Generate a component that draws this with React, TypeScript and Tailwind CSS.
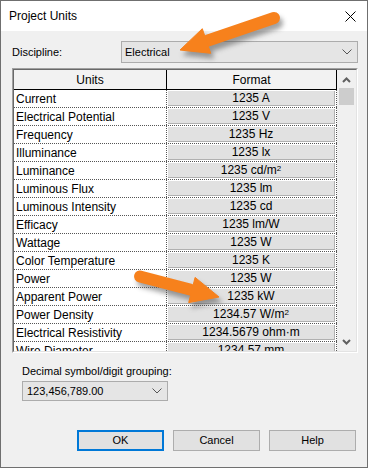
import React from "react";

const rows: [string, React.ReactNode][] = [
  ["Current", "1235 A"],
  ["Electrical Potential", "1235 V"],
  ["Frequency", "1235 Hz"],
  ["Illuminance", "1235 lx"],
  ["Luminance", <>1235 cd/m<sup className="text-[8px] relative -top-[1px]">2</sup></>],
  ["Luminous Flux", "1235 lm"],
  ["Luminous Intensity", "1235 cd"],
  ["Efficacy", "1235 lm/W"],
  ["Wattage", "1235 W"],
  ["Color Temperature", "1235 K"],
  ["Power", "1235 W"],
  ["Apparent Power", "1235 kW"],
  ["Power Density", <>1234.57 W/m<sup className="text-[8px] relative -top-[1px]">2</sup></>],
  ["Electrical Resistivity", "1234.5679 ohm·m"],
  ["Wire Diameter", "1234.57 mm"],
];

function Chevron({ up = false }: { up?: boolean }) {
  return (
    <svg width="9" height="6" viewBox="0 0 9 6">
      <path
        d={up ? "M1 5 L4.5 1.5 L8 5" : "M1 1 L4.5 4.5 L8 1"}
        fill="none"
        stroke="#606060"
        strokeWidth="2"
      />
    </svg>
  );
}

function ThinChevron() {
  return (
    <svg width="10" height="6" viewBox="0 0 10 6">
      <path d="M0.5 0.5 L5 5 L9.5 0.5" fill="none" stroke="#555" strokeWidth="1" />
    </svg>
  );
}

function Arrow({ tail, base, c1, c2, tip }: { tail: [number, number]; base: [number, number]; c1: [number, number]; c2: [number, number]; tip: [number, number] }) {
  return (
    <g>
      <line x1={tail[0]} y1={tail[1]} x2={base[0]} y2={base[1]} strokeWidth="12" strokeLinecap="round" />
      <polygon points={`${c1[0]},${c1[1]} ${tip[0]},${tip[1]} ${c2[0]},${c2[1]}`} strokeLinejoin="round" strokeWidth="1" />
    </g>
  );
}

export default function App() {
  const a1 = { tail: [274, 18] as [number, number], base: [208, 40.5] as [number, number], c1: [202.3, 28.7] as [number, number], c2: [210.7, 53.3] as [number, number], tip: [180, 50] as [number, number] };
  const a2 = { tail: [140, 276.5] as [number, number], base: [190, 289.5] as [number, number], c1: [195.1, 277.4] as [number, number], c2: [188.7, 302.6] as [number, number], tip: [219, 297] as [number, number] };
  return (
    <div className="relative w-[368px] h-[468px] overflow-hidden bg-[#f0f0f0] border border-[#6f6f6f] font-['Liberation_Sans',Arial,sans-serif] text-black">
      {/* Title bar */}
      <div className="h-[30px] bg-white flex items-center justify-between pl-[8px] pr-[11px]">
        <span className="text-[12px]">Project Units</span>
        <svg width="11" height="11" viewBox="0 0 11 11">
          <path d="M0.5 0.5 L10.5 10.5 M10.5 0.5 L0.5 10.5" stroke="#000" strokeWidth="1" />
        </svg>
      </div>

      {/* Body */}
      <div className="pl-[11px] pr-[9px] pt-[10px] flex flex-col">
        <div className="flex items-center h-[22px]">
          <span className="text-[11px] w-[109px]">Discipline:</span>
          <div className="flex-1 h-[22px] bg-[#e5e5e5] border border-[#acacac] flex items-center justify-between pl-[3px] pr-[5px]">
            <span className="text-[11px]">Electrical</span>
            <ThinChevron />
          </div>
        </div>

        {/* Table */}
        <div className="mt-[5px] h-[285px] border-t border-l border-[#a0a0a0] border-r border-b border-r-white border-b-white">
          <div className="h-full border-t border-l border-[#696969] border-r border-b border-r-[#e3e3e3] border-b-[#e3e3e3] flex bg-white">
            <div className="w-[323px] flex flex-col overflow-hidden">
              <div className="h-[20px] shrink-0 flex bg-[#f2f2f2] border-b border-black text-[12px]">
                <div className="w-[153px] border-r border-black flex items-center justify-center">Units</div>
                <div className="flex-1 border-r border-black flex items-center justify-center">Format</div>
              </div>
              {rows.map(([name, fmt], i) => (
                <div key={i} className="h-[18px] shrink-0 flex border-b border-dotted border-[#555] text-[12px] leading-none">
                  <div className="w-[153px] border-r border-dotted border-[#555] flex items-center pl-[2px] bg-white">{name}</div>
                  <div className="flex-1 border-r border-dotted border-[#555] p-[1px] bg-white">
                    <div className="h-full bg-[#e1e1e1] border-b border-r border-[#b0b0b0] flex items-center justify-center">
                      {fmt}
                    </div>
                  </div>
                </div>
              ))}
            </div>
            <div className="flex-1 bg-[#f0f0f0] flex flex-col items-center">
              <div className="h-[17px] flex items-center justify-center mt-[1px]"><Chevron up /></div>
              <div className="w-[15px] h-[17px] bg-[#cdcdcd]" />
              <div className="flex-1" />
              <div className="h-[17px] flex items-center justify-center mb-[1px]"><Chevron /></div>
            </div>
          </div>
        </div>

        <div className="mt-[11px] pl-[10px] text-[11px] h-[14px] leading-[14px]">Decimal symbol/digit grouping:</div>
        <div className="mt-[3px] ml-[10px] w-[146px] h-[20px] bg-[#e5e5e5] border border-[#acacac] flex items-center justify-between pl-[4px] pr-[5px]">
          <span className="text-[11px]">123,456,789.00</span>
          <ThinChevron />
        </div>

        <div className="mt-[29px] flex pl-[65px] gap-[9px]">
          <button className="w-[87px] h-[21px] bg-[#e1e1e1] border-2 border-[#0078d7] text-[11px] flex items-center justify-center">OK</button>
          <button className="w-[87px] h-[21px] bg-[#e1e1e1] border border-[#adadad] text-[11px] flex items-center justify-center">Cancel</button>
          <button className="w-[87px] h-[21px] bg-[#e1e1e1] border border-[#adadad] text-[11px] flex items-center justify-center">Help</button>
        </div>
      </div>

      {/* Annotation arrows */}
      <svg className="absolute left-[-1px] top-[-1px] pointer-events-none" width="368" height="468">
        <defs>
          <filter id="blur" x="-20%" y="-20%" width="140%" height="140%">
            <feGaussianBlur stdDeviation="2.5" />
          </filter>
        </defs>
        <g fill="#555" stroke="#555" opacity="0.55" filter="url(#blur)" transform="translate(3,5)">
          <Arrow {...a1} />
          <Arrow {...a2} />
        </g>
        <g fill="#f7811c" stroke="#f7811c">
          <Arrow {...a1} />
          <Arrow {...a2} />
        </g>
      </svg>
    </div>
  );
}
